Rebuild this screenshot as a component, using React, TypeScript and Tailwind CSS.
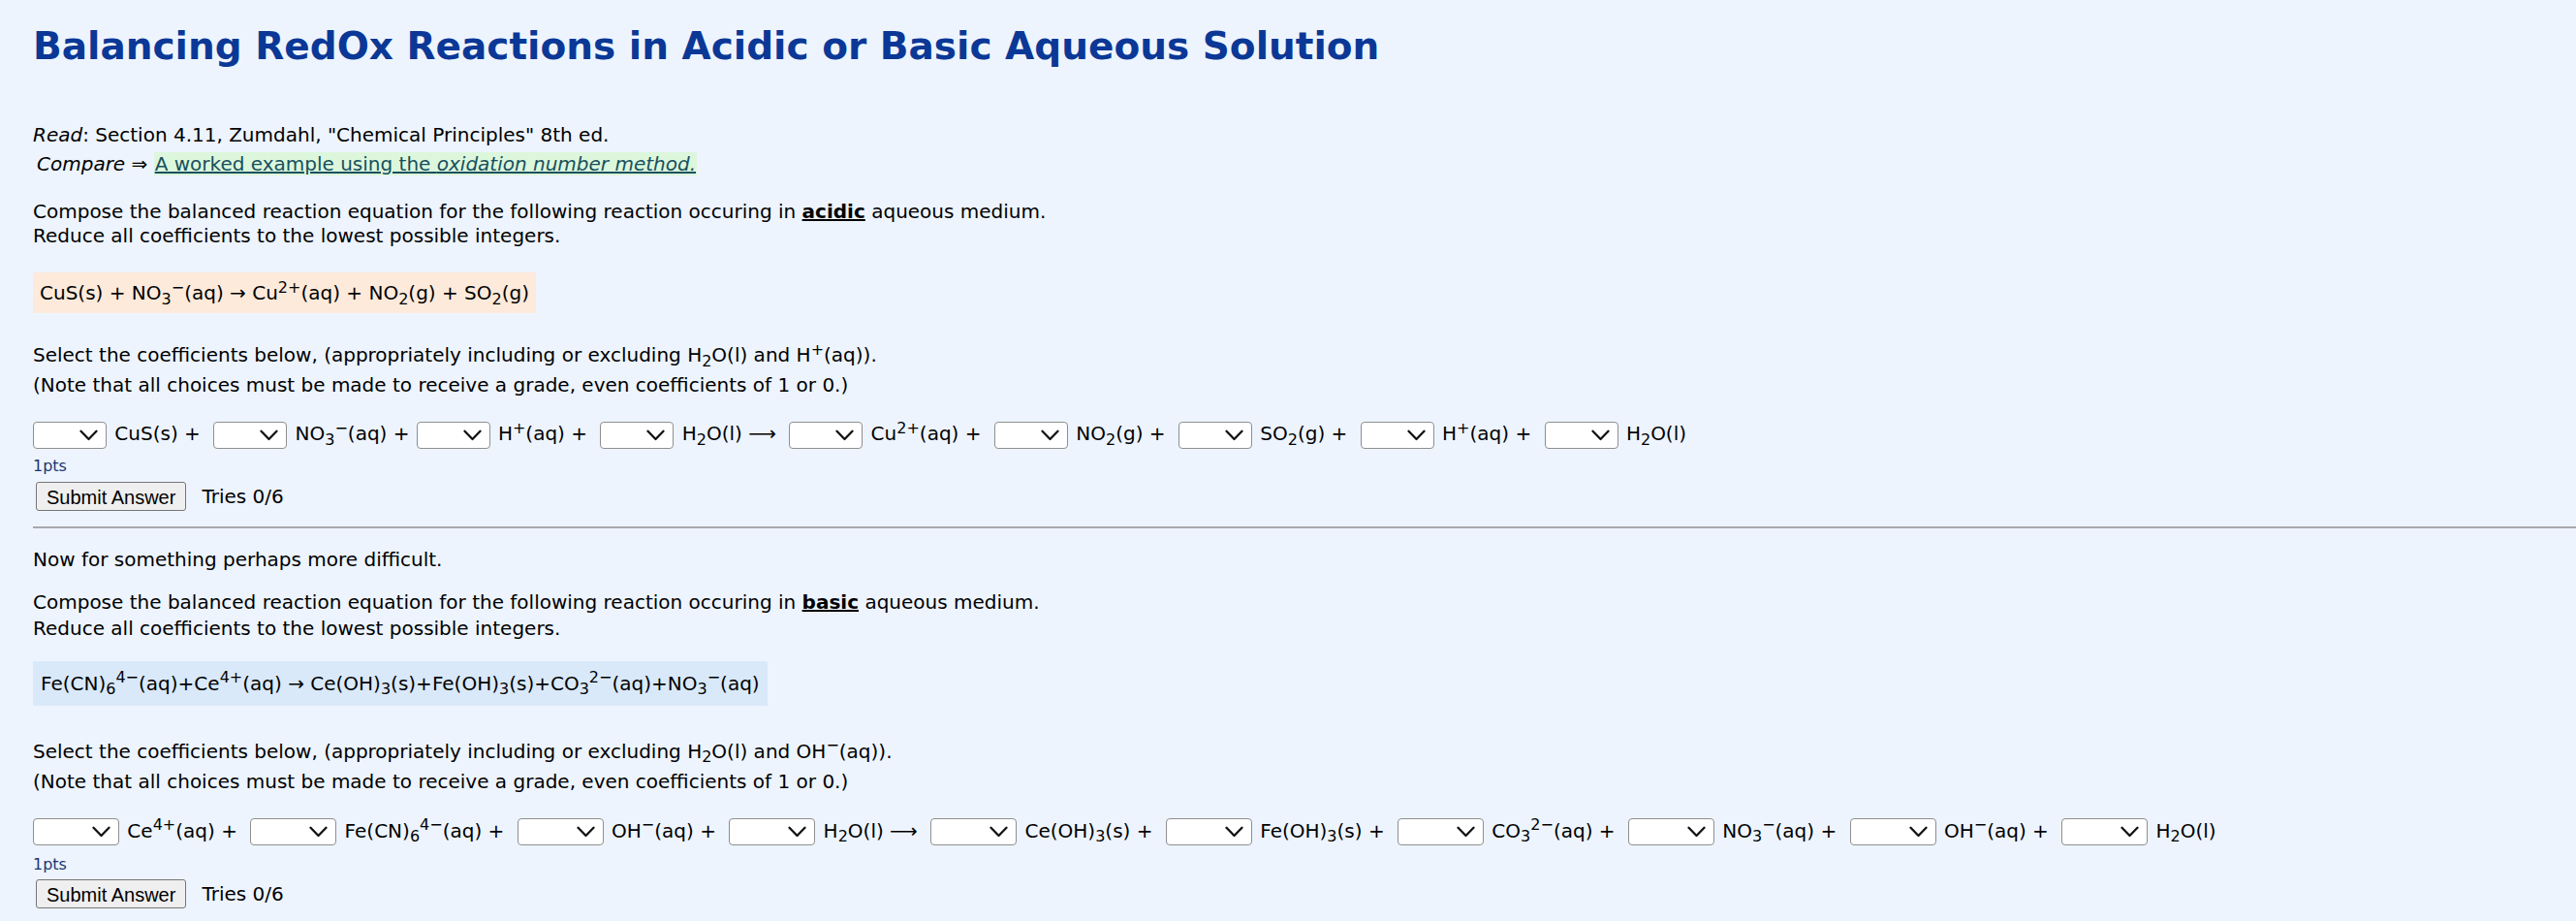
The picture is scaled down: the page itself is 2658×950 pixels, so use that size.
import React from 'react';

const font = { fontFamily: '"DejaVu Sans", Verdana, sans-serif' };

function Sb({ children }: { children: React.ReactNode }) {
  return <sub className="text-[0.8em] -bottom-[0.3em]">{children}</sub>;
}

function Sp({ children }: { children: React.ReactNode }) {
  return <sup className="text-[0.8em] -top-[0.45em]">{children}</sup>;
}

function Sel({ wide }: { wide?: boolean }) {
  return (
    <span
      className={`inline-flex align-middle items-center justify-end ${wide ? 'w-[89px]' : 'w-[76px]'} h-[28px] ml-[7px] mr-[2px] bg-white border border-[#8f8f8f] rounded-[4px] pr-[8px]`}
    >
      <svg width="19" height="12" viewBox="0 0 19 12" fill="none">
        <path d="M1.5 1.8 L9.5 10 L17.5 1.8" stroke="#111" strokeWidth="2.3" strokeLinecap="round" strokeLinejoin="round" />
      </svg>
    </span>
  );
}

function Submit({ top }: { top: string }) {
  return (
    <div className={`flex items-center gap-[16px] ml-[3px] ${top}`}>
      <button
        className="h-[30px] px-[10px] bg-[#efefef] border border-[#767676] rounded-[3px] text-[20px] text-black"
        style={{ fontFamily: '"Liberation Sans", Arial, sans-serif' }}
      >
        Submit Answer
      </button>
      <span className="text-[20px]">Tries 0/6</span>
    </div>
  );
}

export default function App() {
  return (
    <div className="min-h-[950px] w-full bg-[#edf4fe] text-black pl-[34px] pt-[20px] overflow-hidden" style={font}>
      <h1 className="text-[39px] font-bold text-[#0b3896] leading-[56px]">
        Balancing RedOx Reactions in Acidic or Basic Aqueous Solution
      </h1>

      <div className="mt-[48px] text-[20px] leading-[30px]">
        <div>
          <i>Read</i>: Section 4.11, Zumdahl, "Chemical Principles" 8th ed.
        </div>
        <div className="ml-[4px]">
          <i>Compare</i> ⇒{' '}
          <span className="bg-[#dcf7dc] underline text-[#17505e] px-[1px]">
            A worked example using the <i>oxidation number method.</i>
          </span>
        </div>
      </div>

      <div className="mt-[22px] text-[20px] leading-[25px]">
        <div>
          Compose the balanced reaction equation for the following reaction occuring in <b className="underline">acidic</b> aqueous medium.
        </div>
        <div>Reduce all coefficients to the lowest possible integers.</div>
      </div>

      <div className="mt-[25px] inline-block bg-[#fdeadb] px-[7px] h-[42px] leading-[42px] text-[20px]">
        CuS(s) + NO<Sb>3</Sb><Sp>−</Sp>(aq) → Cu<Sp>2+</Sp>(aq) + NO<Sb>2</Sb>(g) + SO<Sb>2</Sb>(g)
      </div>

      <div className="mt-[28px] text-[20px] leading-[31px]">
        <div>
          Select the coefficients below, (appropriately including or excluding H<Sb>2</Sb>O(l) and H<Sp>+</Sp>(aq)).
        </div>
        <div>(Note that all choices must be made to receive a grade, even coefficients of 1 or 0.)</div>
      </div>

      <div className="mt-[19px] -ml-[7px] text-[20px] leading-[30px] whitespace-nowrap">
        <Sel /> CuS(s) + <Sel /> NO<Sb>3</Sb><Sp>−</Sp>(aq) +<Sel /> H<Sp>+</Sp>(aq) + <Sel /> H<Sb>2</Sb>O(l) ⟶ <Sel /> Cu<Sp>2+</Sp>(aq) + <Sel /> NO<Sb>2</Sb>(g) + <Sel /> SO<Sb>2</Sb>(g) + <Sel /> H<Sp>+</Sp>(aq) + <Sel /> H<Sb>2</Sb>O(l)
      </div>
      <div className="text-[16px] text-[#1c3770] leading-[24px] mt-[6px]">1pts</div>
      <Submit top="mt-[4px]" />

      <hr className="mt-[16px] border-t-[2px] border-[#a7a9ad]" />

      <div className="mt-[20px] text-[20px] leading-[25px]">Now for something perhaps more difficult.</div>

      <div className="mt-[18px] text-[20px] leading-[27px]">
        <div>
          Compose the balanced reaction equation for the following reaction occuring in <b className="underline">basic</b> aqueous medium.
        </div>
        <div>Reduce all coefficients to the lowest possible integers.</div>
      </div>

      <div className="mt-[20px] inline-block bg-[#d9e9fa] px-[8px] h-[46px] leading-[46px] text-[20px]">
        Fe(CN)<Sb>6</Sb><Sp>4−</Sp>(aq)+Ce<Sp>4+</Sp>(aq) → Ce(OH)<Sb>3</Sb>(s)+Fe(OH)<Sb>3</Sb>(s)+CO<Sb>3</Sb><Sp>2−</Sp>(aq)+NO<Sb>3</Sb><Sp>−</Sp>(aq)
      </div>

      <div className="mt-[32px] text-[20px] leading-[31px]">
        <div>
          Select the coefficients below, (appropriately including or excluding H<Sb>2</Sb>O(l) and OH<Sp>−</Sp>(aq)).
        </div>
        <div>(Note that all choices must be made to receive a grade, even coefficients of 1 or 0.)</div>
      </div>

      <div className="mt-[20px] -ml-[7px] text-[20px] leading-[30px] whitespace-nowrap">
        <Sel wide /> Ce<Sp>4+</Sp>(aq) + <Sel wide /> Fe(CN)<Sb>6</Sb><Sp>4−</Sp>(aq) + <Sel wide /> OH<Sp>−</Sp>(aq) + <Sel wide /> H<Sb>2</Sb>O(l) ⟶ <Sel wide /> Ce(OH)<Sb>3</Sb>(s) + <Sel wide /> Fe(OH)<Sb>3</Sb>(s) + <Sel wide /> CO<Sb>3</Sb><Sp>2−</Sp>(aq) + <Sel wide /> NO<Sb>3</Sb><Sp>−</Sp>(aq) + <Sel wide /> OH<Sp>−</Sp>(aq) + <Sel wide /> H<Sb>2</Sb>O(l)
      </div>
      <div className="text-[16px] text-[#1c3770] leading-[24px] mt-[8px]">1pts</div>
      <Submit top="mt-[3px]" />
    </div>
  );
}
